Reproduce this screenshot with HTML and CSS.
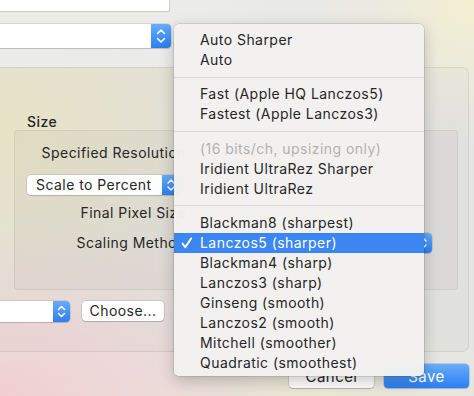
FILE: index.html
```html
<!DOCTYPE html>
<html>
<head>
<meta charset="utf-8">
<link rel="stylesheet" href="styles.css">
</head>
<body>
<div class="win">
  <div class="toolbar">
    <div class="top-field"></div>
    <div class="popup popup-top">
      <span class="pv"></span>
      <span class="stepper st-24"><svg width="20" height="24" viewBox="0 0 20 24"><path d="M6.5 9.5 L10 6 L13.5 9.5 M6.5 14.5 L10 18 L13.5 14.5" fill="none" stroke="#fff" stroke-width="1.6" stroke-linecap="round" stroke-linejoin="round"/></svg></span>
    </div>
  </div>
  <div class="panel">
    <div class="size-label">Size</div>
    <div class="group">
      <div class="frow r1"><span class="lbl">Specified Resolution</span></div>
      <div class="frow r2">
        <div class="popup p-scale">
          <span class="pv">Scale to Percent</span>
          <span class="stepper st-18"><svg width="18" height="20" viewBox="0 0 18 20"><path d="M6 8 L9 5 L12 8 M6 12 L9 15 L12 12" fill="none" stroke="#fff" stroke-width="1.5" stroke-linecap="round" stroke-linejoin="round"/></svg></span>
        </div>
      </div>
      <div class="frow r3"><span class="lbl">Final Pixel Size</span></div>
      <div class="frow r4">
        <span class="lbl">Scaling Method</span>
        <div class="popup p-method">
          <span class="pv">Lanczos5 (sharper)</span>
          <span class="stepper st-18"><svg width="18" height="20" viewBox="0 0 18 20"><path d="M6 8 L9 5 L12 8 M6 12 L9 15 L12 12" fill="none" stroke="#fff" stroke-width="1.5" stroke-linecap="round" stroke-linejoin="round"/></svg></span>
        </div>
      </div>
    </div>
    <div class="bottom-row">
      <div class="popup p-dest">
        <span class="pv"></span>
        <span class="stepper st-17"><svg width="17" height="21" viewBox="0 0 17 21"><path d="M5.5 8.5 L8.5 5.5 L11.5 8.5 M5.5 12.5 L8.5 15.5 L11.5 12.5" fill="none" stroke="#fff" stroke-width="1.5" stroke-linecap="round" stroke-linejoin="round"/></svg></span>
      </div>
      <button class="btn choose">Choose...</button>
    </div>
  </div>
  <div class="footer">
    <button class="btn cancel">Cancel</button>
    <button class="btn save">Save</button>
  </div>
</div>

<div class="menu">
  <div class="mi">Auto Sharper</div>
  <div class="mi">Auto</div>
  <div class="msep"></div>
  <div class="mi">Fast (Apple HQ Lanczos5)</div>
  <div class="mi">Fastest (Apple Lanczos3)</div>
  <div class="msep"></div>
  <div class="mi disabled">(16 bits/ch, upsizing only)</div>
  <div class="mi">Iridient UltraRez Sharper</div>
  <div class="mi">Iridient UltraRez</div>
  <div class="msep"></div>
  <div class="mi">Blackman8 (sharpest)</div>
  <div class="mi sel"><svg class="check" width="12" height="12" viewBox="0 0 12 12"><path d="M1.6 6.6 L4.3 10.2 L10.2 1.4" fill="none" stroke="#fff" stroke-width="1.9" stroke-linecap="round" stroke-linejoin="round"/></svg>Lanczos5 (sharper)</div>
  <div class="mi">Blackman4 (sharp)</div>
  <div class="mi">Lanczos3 (sharp)</div>
  <div class="mi">Ginseng (smooth)</div>
  <div class="mi">Lanczos2 (smooth)</div>
  <div class="mi">Mitchell (smoother)</div>
  <div class="mi">Quadratic (smoothest)</div>
</div>
</body>
</html>
```

FILE: styles.css
```css
* { box-sizing: border-box; }

html, body {
  margin: 0;
  width: 474px;
  height: 396px;
  overflow: hidden;
}

body {
  position: relative;
  font-family: Inter, "Liberation Sans", sans-serif;
  font-size: 14px;
  letter-spacing: 0.45px;
  color: #262626;
  background:
    radial-gradient(ellipse 320px 170px at 0% 100%, rgba(241, 208, 209, 1) 0%, rgba(241, 208, 209, 0) 100%),
    radial-gradient(ellipse 280px 230px at 0% 32%, rgba(236, 231, 200, 1), rgba(236, 231, 200, 0) 100%),
    radial-gradient(ellipse 170px 140px at 100% 0%, rgba(243, 240, 210, 1), rgba(243, 240, 210, 0) 100%),
    radial-gradient(ellipse 200px 80px at 65% 100%, rgba(236, 234, 212, 0.9), rgba(236, 234, 212, 0) 100%),
    #e5e5e3;
}

.win {
  display: flex;
  flex-direction: column;
  align-items: flex-start;
}

.toolbar {
  align-self: stretch;
  height: 67px;
  background: linear-gradient(90deg, rgba(236, 236, 235, 0.95) 0%, rgba(236, 236, 235, 0.9) 40%, rgba(236, 236, 235, 0) 95%);
}

.top-field {
  width: 170px;
  height: 12px;
  background: #fff;
  border-right: 1px solid #cfcfcf;
  border-bottom: 1px solid #c9c9c9;
  border-bottom-right-radius: 2px;
}

/* popup buttons */
.popup {
  display: flex;
  align-items: stretch;
  background: #fff;
  border-radius: 4px;
  box-shadow: 0 0 0 0.5px rgba(0, 0, 0, 0.18), 0 1px 1px rgba(0, 0, 0, 0.12);
  overflow: hidden;
}
.pv {
  flex: 1;
  padding-left: 9px;
  line-height: 20px;
  white-space: nowrap;
  overflow: hidden;
}
.stepper {
  display: flex;
  align-items: center;
  justify-content: center;
  background: linear-gradient(#69adfa, #2a7ff3);
}
.st-24 { width: 20px; }
.st-18 { width: 18px; }
.st-17 { width: 17px; }

.popup-top {
  margin-top: 12px;
  margin-left: -10px;
  width: 181px;
  height: 24px;
}

.panel {
  margin-left: -10px;
  width: 479px;
  height: 285px;
  padding-top: 46px;
  border: 1px solid rgba(0, 0, 0, 0.075);
  border-radius: 0 7px 7px 0;
  background: rgba(120, 120, 120, 0.03);
}

.size-label {
  padding-left: 36px;
  line-height: 16px;
  font-weight: 500;
}

.group {
  margin-left: 23px;
  width: 444px;
  height: 160px;
  border: 1px solid rgba(0, 0, 0, 0.06);
  border-radius: 4px;
  background: rgba(110, 100, 90, 0.05);
}

.frow {
  display: flex;
  align-items: center;
  height: 20px;
}
.r1 { margin-top: 12px; }
.r2 { margin-top: 12px; }
.r3 { margin-top: 8px; }
.r4 { margin-top: 10px; }

.lbl {
  width: 171px;
  text-align: right;
  white-space: nowrap;
  line-height: 20px;
}

.p-scale {
  margin-left: 12px;
  width: 153px;
  height: 20px;
}
.p-method {
  margin-left: 4px;
  width: 242px;
  height: 20px;
}

.bottom-row {
  display: flex;
  align-items: flex-start;
  gap: 12px;
  margin-top: 11px;
  margin-left: -30px;
}
.p-dest {
  width: 109px;
  height: 21px;
}

.btn {
  font-family: inherit;
  font-size: 14px;
  letter-spacing: 0.45px;
  color: #262626;
  background: #fff;
  border: none;
  border-radius: 4px;
  box-shadow: 0 0 0 0.5px rgba(0, 0, 0, 0.2), 0 1px 1px rgba(0, 0, 0, 0.14);
  padding: 0;
}
.choose {
  width: 82px;
  height: 20px;
  line-height: 20px;
}

.footer {
  display: flex;
  gap: 10px;
  align-self: flex-end;
  margin-top: 12px;
  margin-right: 5px;
}
.cancel, .save {
  width: 85px;
  height: 24px;
  font-size: 15px;
}
.save {
  color: #fff;
  background: linear-gradient(#69adfa, #2a7ff3);
  box-shadow: 0 0 0 0.5px rgba(20, 90, 200, 0.4), 0 1px 1px rgba(0, 0, 0, 0.12);
}

/* menu overlay */
.menu {
  position: absolute;
  left: 174px;
  top: 24px;
  width: 250px;
  padding: 6px 0 4px;
  background: rgba(242, 241, 240, 0.98);
  border-radius: 5px;
  box-shadow: 0 0 0 0.5px rgba(0, 0, 0, 0.2), 0 5px 16px rgba(0, 0, 0, 0.22);
}
.mi {
  position: relative;
  height: 19.9px;
  line-height: 19.9px;
  padding-left: 26px;
  white-space: nowrap;
  color: #262626;
}
.mi.disabled { color: #b2b2b2; }
.mi.sel {
  background: #3b86f1;
  color: #fff;
}
.check {
  position: absolute;
  left: 7px;
  top: 4px;
}
.msep {
  height: 14.7px;
  display: flex;
  align-items: center;
}
.msep::after {
  content: "";
  display: block;
  width: 100%;
  height: 1px;
  background: #d9d9d8;
}
```
